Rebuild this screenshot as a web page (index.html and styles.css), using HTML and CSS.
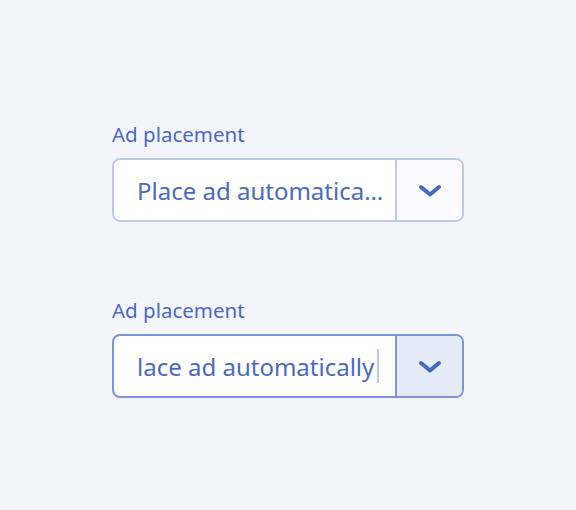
FILE: index.html
```html
<!DOCTYPE html>
<html>
<head>
<meta charset="utf-8">
<link rel="stylesheet" href="styles.css">
</head>
<body>
<div class="page">
  <div class="field">
    <div class="label">Ad placement</div>
    <div class="combo">
      <div class="value">Place ad automatica…</div>
      <div class="btn">
        <svg width="24" height="13" viewBox="0 0 24 13"><path d="M3 3 L12 10.5 L21 3" fill="none" stroke="#4568c4" stroke-width="4" stroke-linecap="round" stroke-linejoin="round"/></svg>
      </div>
    </div>
  </div>
  <div class="field">
    <div class="label">Ad placement</div>
    <div class="combo focused">
      <div class="value">lace ad automatically<span class="caret"></span></div>
      <div class="btn">
        <svg width="24" height="13" viewBox="0 0 24 13"><path d="M3 3 L12 10.5 L21 3" fill="none" stroke="#4568c4" stroke-width="4" stroke-linecap="round" stroke-linejoin="round"/></svg>
      </div>
    </div>
  </div>
</div>
</body>
</html>
```
FILE: styles.css
```css
html, body {
  margin: 0;
  padding: 0;
  background: #f4f5fa;
}
.page {
  padding: 120px 0 0 112px;
  display: flex;
  flex-direction: column;
  gap: 74px;
  font-family: "Noto Sans", sans-serif;
  color: #4a69c2;
}
.field {
  display: flex;
  flex-direction: column;
  gap: 10px;
}
.label {
  font-size: 20.5px;
  line-height: 28px;
}
.combo {
  width: 352px;
  height: 64px;
  box-sizing: border-box;
  border: 2px solid #bccbea;
  border-radius: 8px;
  background: #ffffff;
  display: flex;
  overflow: hidden;
}
.combo.focused {
  border-color: #7d95d9;
}
.value {
  flex: 1;
  padding-left: 23px;
  display: flex;
  align-items: center;
  font-size: 24px;
  white-space: nowrap;
  overflow: hidden;
}
.caret {
  display: inline-block;
  width: 2px;
  height: 34px;
  margin-left: 3px;
  background: #b8c9ec;
}
.btn {
  width: 65px;
  border-left: 2px solid #bccbea;
  background: #fbfbfe;
  display: flex;
  align-items: center;
  justify-content: center;
}
.focused .btn {
  border-left-color: #7d95d9;
  background: #e5ebf7;
}
```
